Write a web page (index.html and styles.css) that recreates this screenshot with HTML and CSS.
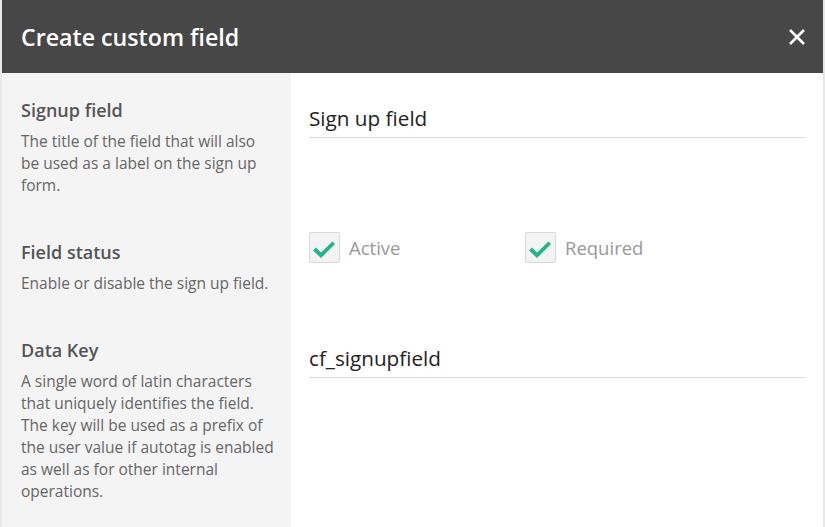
FILE: index.html
```html
<!DOCTYPE html>
<html>
<head>
<meta charset="utf-8">
<link rel="stylesheet" href="styles.css">
</head>
<body>
<div class="page">
  <div class="dialog">
    <header class="header">
      <h1 class="title">Create custom field</h1>
      <button class="close" aria-label="Close">
        <svg width="18" height="18" viewBox="0 0 18 18"><path d="M2 2 L16 16 M16 2 L2 16" stroke="#fff" stroke-width="2.6" stroke-linecap="butt"/></svg>
      </button>
    </header>
    <div class="form">
      <div class="info">
        <h2 class="label">Signup field</h2>
        <p class="desc">The title of the field that will also be used as a label on the sign up form.</p>
      </div>
      <div class="control">
        <div class="input">Sign up field</div>
      </div>

      <div class="info">
        <h2 class="label">Field status</h2>
        <p class="desc">Enable or disable the sign up field.</p>
      </div>
      <div class="control control-checks">
        <label class="check">
          <span class="box"><svg width="24" height="20" viewBox="0 0 24 20"><path d="M1 11.5 L4 8.5 L9 13.5 L20.5 2.5 L23 5 L9 19 Z" fill="#22b58c"/></svg></span>
          <span class="check-text">Active</span>
        </label>
        <label class="check">
          <span class="box"><svg width="24" height="20" viewBox="0 0 24 20"><path d="M1 11.5 L4 8.5 L9 13.5 L20.5 2.5 L23 5 L9 19 Z" fill="#22b58c"/></svg></span>
          <span class="check-text">Required</span>
        </label>
      </div>

      <div class="info">
        <h2 class="label">Data Key</h2>
        <p class="desc">A single word of latin characters that uniquely identifies the field. The key will be used as a prefix of the user value if autotag is enabled as well as for other internal operations.</p>
      </div>
      <div class="control">
        <div class="input">cf_signupfield</div>
      </div>
    </div>
  </div>
</div>
</body>
</html>
```

FILE: styles.css
```css
html, body {
  margin: 0;
  padding: 0;
  height: 100%;
}
body {
  font-family: "Open Sans", "Noto Sans", sans-serif;
  background: #e8e8e8;
  overflow: hidden;
}
.page {
  padding-left: 2px;
  height: 100%;
}
.dialog {
  background: #ffffff;
  width: 821px;
  height: 100%;
  display: flex;
  flex-direction: column;
}
.header {
  height: 73px;
  background: #474747;
  display: flex;
  align-items: center;
  justify-content: space-between;
  padding: 0 16px 0 19px;
  box-sizing: border-box;
  flex-shrink: 0;
}
.title {
  margin: 0;
  color: #ffffff;
  font-size: 23.2px;
  font-weight: 600;
}
.close {
  background: none;
  border: 0;
  padding: 0;
  width: 20px;
  height: 20px;
  display: flex;
  align-items: center;
  justify-content: center;
  cursor: pointer;
}
.form {
  flex: 1;
  display: grid;
  grid-template-columns: 289px 1fr;
  grid-template-rows: auto auto 1fr;
}
.info {
  background: #f4f4f4;
  padding: 25px 14px 19px 19px;
}
.label {
  margin: 0 0 8px;
  font-size: 18px;
  line-height: 24px;
  font-weight: 600;
  color: #555555;
}
.desc {
  margin: 0;
  font-size: 15.5px;
  line-height: 22px;
  color: #666666;
}
.control {
  padding: 25px 17px 0 18px;
}
.input {
  height: 40px;
  line-height: 40px;
  box-sizing: border-box;
  border-bottom: 1px solid #dddddd;
  font-size: 20.7px;
  color: #222222;
}
.control-checks {
  padding-top: 17px;
  display: flex;
  align-items: flex-start;
}
.check {
  display: flex;
  align-items: center;
  width: 216px;
}
.box {
  width: 29px;
  height: 29px;
  border: 1px solid #d8d8d8;
  border-radius: 2px;
  background: #f3f3f3;
  display: flex;
  align-items: center;
  justify-content: center;
  margin-right: 9px;
}
.box svg {
  margin-top: 3px;
  margin-left: -1px;
}
.check-text {
  font-size: 18.5px;
  color: #999999;
}
```
